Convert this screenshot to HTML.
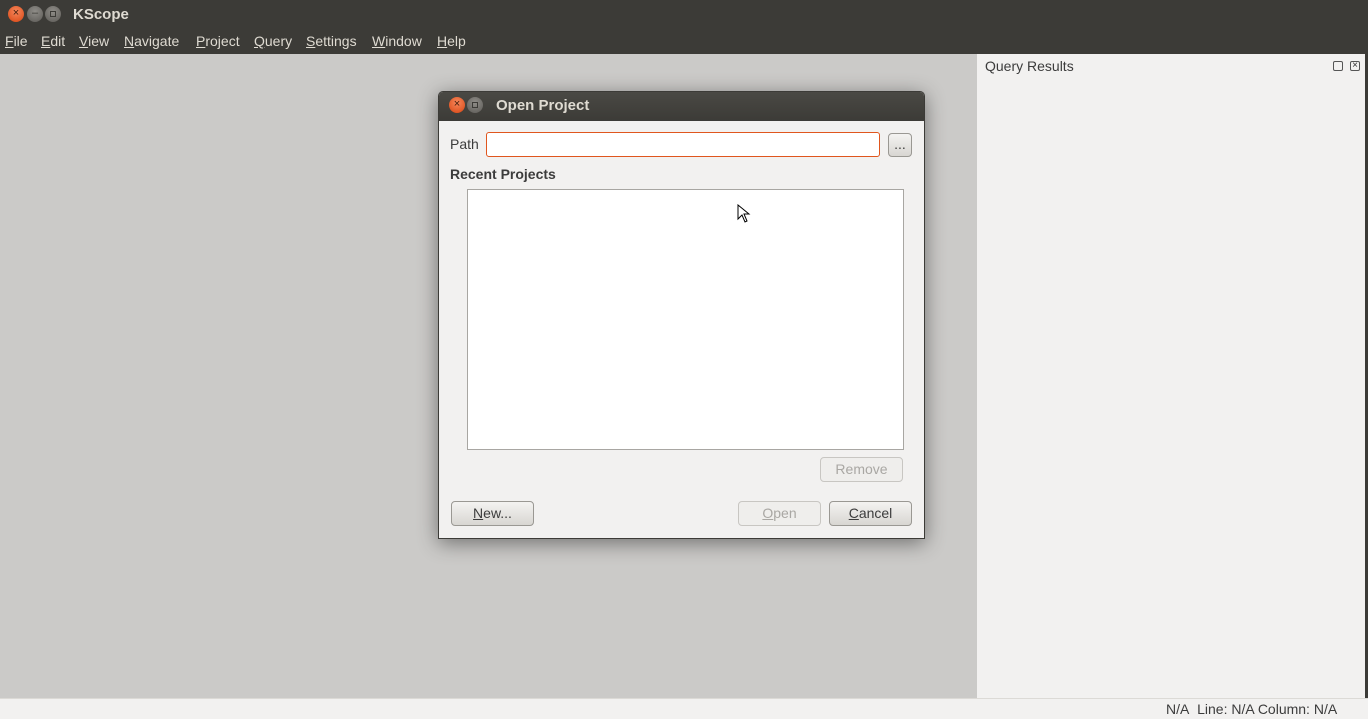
<!DOCTYPE html>
<html><head><style>
*{margin:0;padding:0;box-sizing:border-box}
body{width:1368px;height:719px;overflow:hidden;background:#3c3b37;font-family:"Liberation Sans","DejaVu Sans",sans-serif;font-size:14px;position:relative}
.abs{position:absolute}
.menu span{position:absolute;top:33px;color:#dfdbd2;font-size:14px}
.menu u{text-decoration:underline}
.btn{position:absolute;border:1px solid #9a9893;border-radius:4px;background:linear-gradient(#f4f3f1,#d8d6d2);font-size:14px;color:#3c3c3c;text-align:center;line-height:22px}
.dis{border-color:#c8c6c2;background:#efeeec;color:#a9a7a3}
.circ{position:absolute;width:16px;height:16px;border-radius:50%;text-align:center;font-size:11px;line-height:15px}
</style></head><body>
<div class="circ" style="left:8px;top:6px;background:radial-gradient(circle at 50% 35%,#f7875b,#d74512);color:#3c1a0b">×</div>
<div class="circ" style="left:27px;top:6px;background:radial-gradient(circle at 50% 35%,#8f8d88,#5c5a56);color:#3c3b37">–</div>
<div class="circ" style="left:45px;top:6px;background:radial-gradient(circle at 50% 35%,#8f8d88,#5c5a56)"><div style="position:absolute;left:5px;top:5px;width:6px;height:6px;border:1px solid #3c3b37"></div></div>
<div class="abs" style="left:73px;top:6px;color:#dfdbd2;font-weight:bold;font-size:15px">KScope</div>
<div class="menu">
<span style="left:5px"><u>F</u>ile</span><span style="left:41px"><u>E</u>dit</span><span style="left:79px"><u>V</u>iew</span><span style="left:124px"><u>N</u>avigate</span><span style="left:196px"><u>P</u>roject</span><span style="left:254px"><u>Q</u>uery</span><span style="left:306px"><u>S</u>ettings</span><span style="left:372px"><u>W</u>indow</span><span style="left:437px"><u>H</u>elp</span>
</div>
<div class="abs" style="left:0;top:54px;width:977px;height:644px;background:#cbcac8"></div>
<div class="abs" style="left:977px;top:54px;width:388px;height:644px;background:#f2f1f0"></div>
<div class="abs" style="left:985px;top:58px;color:#3c3c3c;font-size:14px">Query Results</div>
<div class="abs" style="left:1333px;top:61px;width:10px;height:10px;border:1px solid #555;border-radius:2px"></div>
<div class="abs" style="left:1350px;top:61px;width:10px;height:10px;border:1px solid #555;border-radius:2px;font-size:10px;line-height:8px;text-align:center;color:#333">×</div>
<div class="abs" style="left:0;top:698px;width:1368px;height:21px;background:#f2f1f0;border-top:1px solid #dcdad6"></div>
<div class="abs" style="left:1166px;top:701px;color:#3c3c3c;font-size:14px">N/A&nbsp; Line: N/A Column: N/A</div>
<div class="abs" style="left:438px;top:91px;width:487px;height:448px;box-shadow:0 4px 20px rgba(0,0,0,.45);border:1px solid #3c3b37;border-radius:5px 5px 0 0;background:#f2f1f0;overflow:hidden">
<div style="height:29px;background:linear-gradient(#4a4944,#3c3b37)"></div>
</div>
<div class="circ" style="left:449px;top:97px;background:radial-gradient(circle at 50% 35%,#f7875b,#d74512);color:#3c1a0b">×</div>
<div class="circ" style="left:467px;top:97px;background:radial-gradient(circle at 50% 35%,#8f8d88,#5c5a56)"><div style="position:absolute;left:5px;top:5px;width:6px;height:6px;border:1px solid #3c3b37"></div></div>
<div class="abs" style="left:496px;top:97px;color:#dfdbd2;font-weight:bold;font-size:15px">Open Project</div>
<div class="abs" style="left:450px;top:136px;color:#3c3c3c">Path</div>
<div class="abs" style="left:486px;top:132px;width:394px;height:25px;border:1px solid #e0561e;border-radius:3px;background:#fff"></div>
<div class="btn" style="left:888px;top:133px;width:24px;height:24px;line-height:20px">...</div>
<div class="abs" style="left:450px;top:166px;color:#3c3c3c;font-weight:bold">Recent Projects</div>
<div class="abs" style="left:467px;top:189px;width:437px;height:261px;background:#fff;border:1px solid #a8a6a2"></div>
<div class="btn dis" style="left:820px;top:457px;width:83px;height:25px">Remove</div>
<div class="btn" style="left:451px;top:501px;width:83px;height:25px"><u>N</u>ew...</div>
<div class="btn dis" style="left:738px;top:501px;width:83px;height:25px"><u>O</u>pen</div>
<div class="btn" style="left:829px;top:501px;width:83px;height:25px"><u>C</u>ancel</div>
<svg class="abs" style="left:737px;top:204px" width="14" height="20"><path d="M1 1 L1 15 L5 11 L8 18 L10 17 L7 10 L12 10 Z" fill="#fff" stroke="#000" stroke-width="1"/></svg>
</body></html>
